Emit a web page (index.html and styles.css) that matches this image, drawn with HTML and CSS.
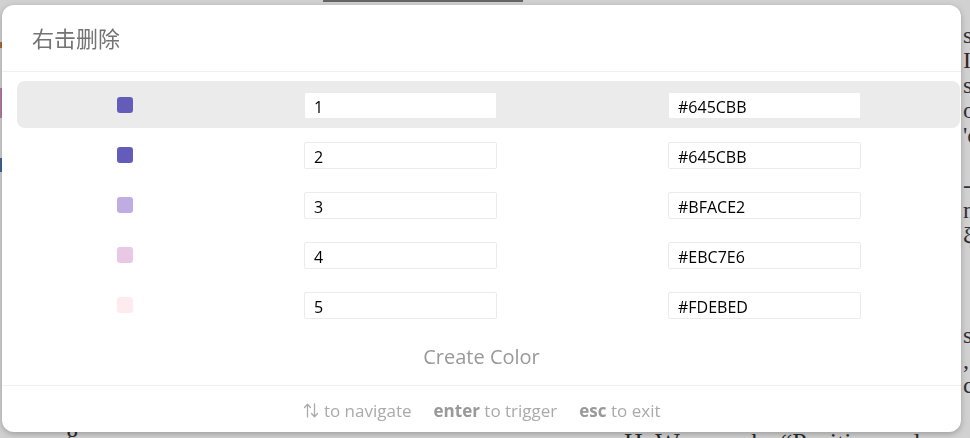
FILE: index.html
```html
<!DOCTYPE html>
<html lang="zh">
<head>
<meta charset="utf-8">
<title>Colors</title>
<link rel="stylesheet" href="styles.css">
</head>
<body>
<div class="page">
  <div class="page-bar"></div>
  <div class="page-left">
    <span class="bit orange"></span>
    <span class="bit pink"></span>
    <span class="bit blue"></span>
  </div>
  <div class="page-main"></div>
  <div class="page-side">
    <div>sa</div>
    <div class="dark">I</div>
    <div>s</div>
    <div>oi</div>
    <div>'c</div>
    <div>&nbsp;</div>
    <div>-</div>
    <div>n</div>
    <div>ξ</div>
    <div>&nbsp;</div>
    <div>&nbsp;</div>
    <div>&nbsp;</div>
    <div>s</div>
    <div>,</div>
    <div>c:</div>
  </div>
  <div class="page-foot">
    <span class="foot-left">g</span>
    <span class="foot-right">H. W. remarks “Positive and</span>
  </div>
</div>
<div class="overlay"></div>
<div class="modal">
  <div class="modal-head">
    <span class="modal-title">右击删除</span>
  </div>
  <div class="color-list">
    <div class="color-row active">
      <span class="swatch" style="background:#645CBB"></span>
      <input class="field" value="1">
      <input class="field" value="#645CBB">
    </div>
    <div class="color-row">
      <span class="swatch" style="background:#645CBB"></span>
      <input class="field" value="2">
      <input class="field" value="#645CBB">
    </div>
    <div class="color-row">
      <span class="swatch" style="background:#BFACE2"></span>
      <input class="field" value="3">
      <input class="field" value="#BFACE2">
    </div>
    <div class="color-row">
      <span class="swatch" style="background:#EBC7E6"></span>
      <input class="field" value="4">
      <input class="field" value="#EBC7E6">
    </div>
    <div class="color-row">
      <span class="swatch" style="background:#FDEBED"></span>
      <input class="field" value="5">
      <input class="field" value="#FDEBED">
    </div>
  </div>
  <div class="create">Create Color</div>
  <div class="modal-foot">
    <span class="hint"><svg class="arrows" width="16" height="15" viewBox="0 0 16 15" aria-hidden="true"><path d="M4.5 14V1.5M1.5 4.5L4.5 1.2L7.5 4.5M11.5 1V13.5M8.5 10.5L11.5 13.8L14.5 10.5" fill="none" stroke="#aaaaaa" stroke-width="1.3" stroke-linecap="round" stroke-linejoin="round"/></svg> to navigate</span>
    <span class="hint"><b>enter</b> to trigger</span>
    <span class="hint"><b>esc</b> to exit</span>
  </div>
</div>
</body>
</html>
```

FILE: styles.css
```css
html, body {
  margin: 0;
  padding: 0;
  height: 100%;
  overflow: hidden;
}

body {
  background: #ffffff;
  font-family: "Liberation Serif", serif;
}

.page {
  height: 100%;
  display: grid;
  grid-template-columns: 4px 954px 1fr;
  grid-template-rows: 2px 428px 1fr;
}

.page-bar {
  grid-column: 1 / 4;
  margin-left: 323px;
  width: 200px;
  background: #707070;
}

.page-left {
  display: flex;
  flex-direction: column;
  gap: 40px;
  padding-top: 40px;
}

.bit {
  width: 3px;
  height: 20px;
}

.bit.orange { background: #c87a30; height: 6px; }
.bit.pink { background: #d890c0; height: 30px; }
.bit.blue { background: #4070b0; height: 14px; }

.page-side {
  overflow: hidden;
  white-space: nowrap;
  padding: 21px 0 0 5px;
  font-size: 24px;
  line-height: 25px;
  color: #2a2a3a;
}

.page-side .dark {
  color: #3a1a10;
}

.page-foot {
  grid-column: 1 / 4;
  overflow: hidden;
  white-space: nowrap;
  font-size: 26px;
  line-height: 30px;
  color: #222222;
  display: flex;
}

.foot-left {
  margin-left: 66px;
  margin-top: -12px;
}

.foot-right {
  margin-left: 545px;
  margin-top: -2px;
}

.overlay {
  position: fixed;
  inset: 0;
  background: rgba(70, 70, 70, 0.25);
}

.modal {
  position: fixed;
  top: 5px;
  left: 2px;
  width: 959px;
  height: 427px;
  background: #ffffff;
  border-radius: 12px;
  box-shadow: 0 2px 6px rgba(0, 0, 0, 0.25);
  display: flex;
  flex-direction: column;
  font-family: "Open Sans", "Noto Sans CJK SC", sans-serif;
  overflow: hidden;
}

.modal-head {
  height: 66px;
  display: flex;
  align-items: center;
  padding-left: 30px;
  border-bottom: 1px solid #f0f0f0;
  flex-shrink: 0;
}

.modal-title {
  font-family: "Noto Sans CJK SC", sans-serif;
  font-size: 22px;
  color: #737373;
  margin-top: -2px;
}

.color-list {
  display: flex;
  flex-direction: column;
  gap: 3px;
  padding: 9px 1px 0 15px;
}

.color-row {
  height: 47px;
  display: flex;
  align-items: center;
  justify-content: space-between;
  padding: 0 99px 0 100px;
  border-radius: 8px;
}

.color-row.active {
  background: #ebebeb;
}

.swatch {
  width: 16px;
  height: 16px;
  border-radius: 3px;
  flex-shrink: 0;
}

.field {
  width: 193px;
  height: 27px;
  box-sizing: border-box;
  border: 1px solid #ebebeb;
  border-radius: 2px;
  background: #ffffff;
  padding: 2px 0 0 9px;
  font-family: "Open Sans", sans-serif;
  font-size: 16px;
  color: #000000;
  outline: none;
  margin-top: 2px;
}

.create {
  height: 57px;
  display: flex;
  align-items: center;
  justify-content: center;
  font-size: 20px;
  color: #999999;
  border-bottom: 1px solid #f0f0f0;
}

.modal-foot {
  flex: 1;
  display: flex;
  align-items: center;
  justify-content: center;
  gap: 22px;
  font-size: 17px;
  color: #aaaaaa;
  padding-top: 2px;
}

.hint {
  display: inline-flex;
  align-items: center;
  white-space: pre;
}

.modal-foot b {
  color: #999999;
  font-weight: 700;
}

.arrows {
  display: block;
  margin-right: 1px;
}
```
